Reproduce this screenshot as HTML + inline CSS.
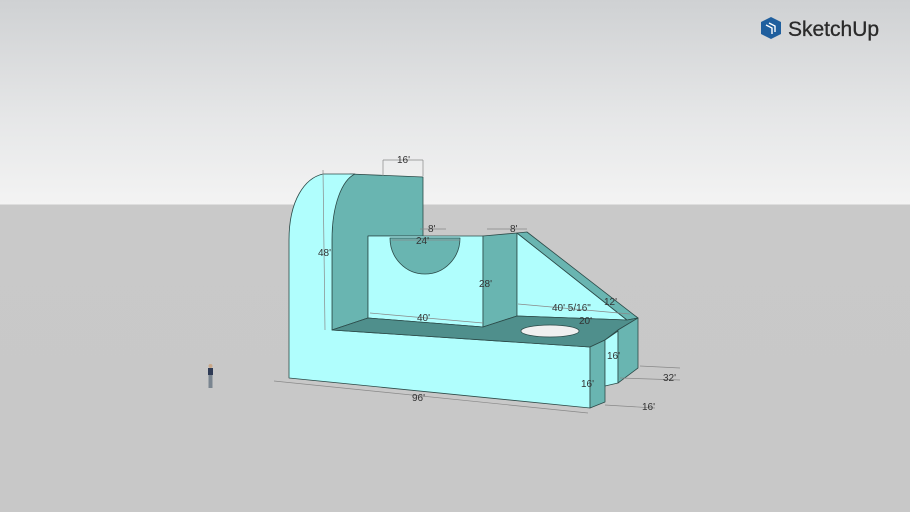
<!DOCTYPE html>
<html><head><style>
html,body{margin:0;padding:0;width:910px;height:512px;overflow:hidden}
body{background:linear-gradient(#cfd1d3 0px,#e6e7e8 120px,#f3f3f3 204px,#c9c9c9 205px,#c8c8c8 512px)}
svg{position:absolute;left:0;top:0}
text{font-family:"Liberation Sans",sans-serif;font-size:10px;fill:#333}
.d{stroke:#888;stroke-width:0.7;fill:none}
.o{stroke:#2c4a48;stroke-width:0.8;stroke-linejoin:round}
</style></head><body>
<svg width="910" height="512" viewBox="0 0 910 512">
<path class="o" fill="#69b5b1" d="M350,174 L423,177 L423,236 L368,236 L368,318 L332,330 L332,240 C332,205 340,183 350,174 Z"/>
<path class="o" fill="#b0fefd" d="M289,378 L289,240 C289,200 305,178 323,174 L355,174 C342,180 332,205 332,240 L332,330 L590,347 L590,408 Z"/>
<path class="o" fill="#b0fefd" d="M368,236 L483,236 L483,327 L368,318 Z"/>
<path class="o" fill="#69b5b1" d="M390,238 A34,35 0 0 0 460,238 Z"/>
<path class="o" fill="#69b5b1" d="M483,236 L517,233 L517,316 L483,327 Z"/>
<path class="o" fill="#b0fefd" d="M517,233 L627,320 L517,316 Z"/>
<path class="o" fill="#69b5b1" d="M517,233 L527,232 L638,318 L627,320 Z"/>
<path class="o" fill="#4f8f8c" d="M332,330 L368,318 L483,327 L517,316 L627,320 L638,318 L618,330 L605,340 L590,347 Z"/>
<ellipse cx="550" cy="331" rx="29" ry="6" fill="#f0f0f0" stroke="#2c4a48" stroke-width="0.7"/>
<path class="o" fill="#69b5b1" d="M590,347 L605,340 L605,402 L590,408 Z"/>
<path class="o" fill="#b0fefd" d="M605,340 L618,331 L618,383 L605,386 Z"/>
<path class="o" fill="#69b5b1" d="M618,330 L638,318 L638,368 L618,383 Z"/>
<path class="d" d="M383,160 L383,176 M423,160 L423,176 M383,160 L423,160"/>
<path class="d" d="M323,170 L325,330 M420,229 L446,229 M487,229 L527,229 M392,240 L460,240 M370,313 L483,323 M518,304 L630,314 M274,381 L588,413 M605,405 L655,408 M620,378 L680,380 M640,366 L680,368"/>
<text x="397" y="163">16'</text>
<text x="318" y="256">48'</text>
<text x="428" y="232">8'</text>
<text x="416" y="244">24'</text>
<text x="510" y="232">8'</text>
<text x="479" y="287">28'</text>
<text x="417" y="321">40'</text>
<text x="552" y="311">40' 5/16"</text>
<text x="604" y="305">12'</text>
<text x="579" y="324">20'</text>
<text x="607" y="359">16'</text>
<text x="581" y="387">16'</text>
<text x="412" y="401">96'</text>
<text x="663" y="381">32'</text>
<text x="642" y="410">16'</text>
<rect x="208" y="368" width="5" height="7" fill="#2f3b55"/>
<circle cx="210.5" cy="366" r="2" fill="#c9a88a"/>
<rect x="208.5" y="375" width="4" height="13" fill="#7a8590"/>
<g transform="translate(761,17)">
<path d="M10,0 L20,5 L20,17 L10,22 L0,17 L0,5 Z" fill="#1f5f9e"/>
<path d="M5,8 L11,11 L11,17 M8,6 L14,9 L14,15" stroke="#fff" stroke-width="1.4" fill="none"/>
</g>
<text x="788" y="36" style="font-size:21px;fill:#2a2a2a;stroke:#2a2a2a;stroke-width:0.3">SketchUp</text>
</svg>
</body></html>
